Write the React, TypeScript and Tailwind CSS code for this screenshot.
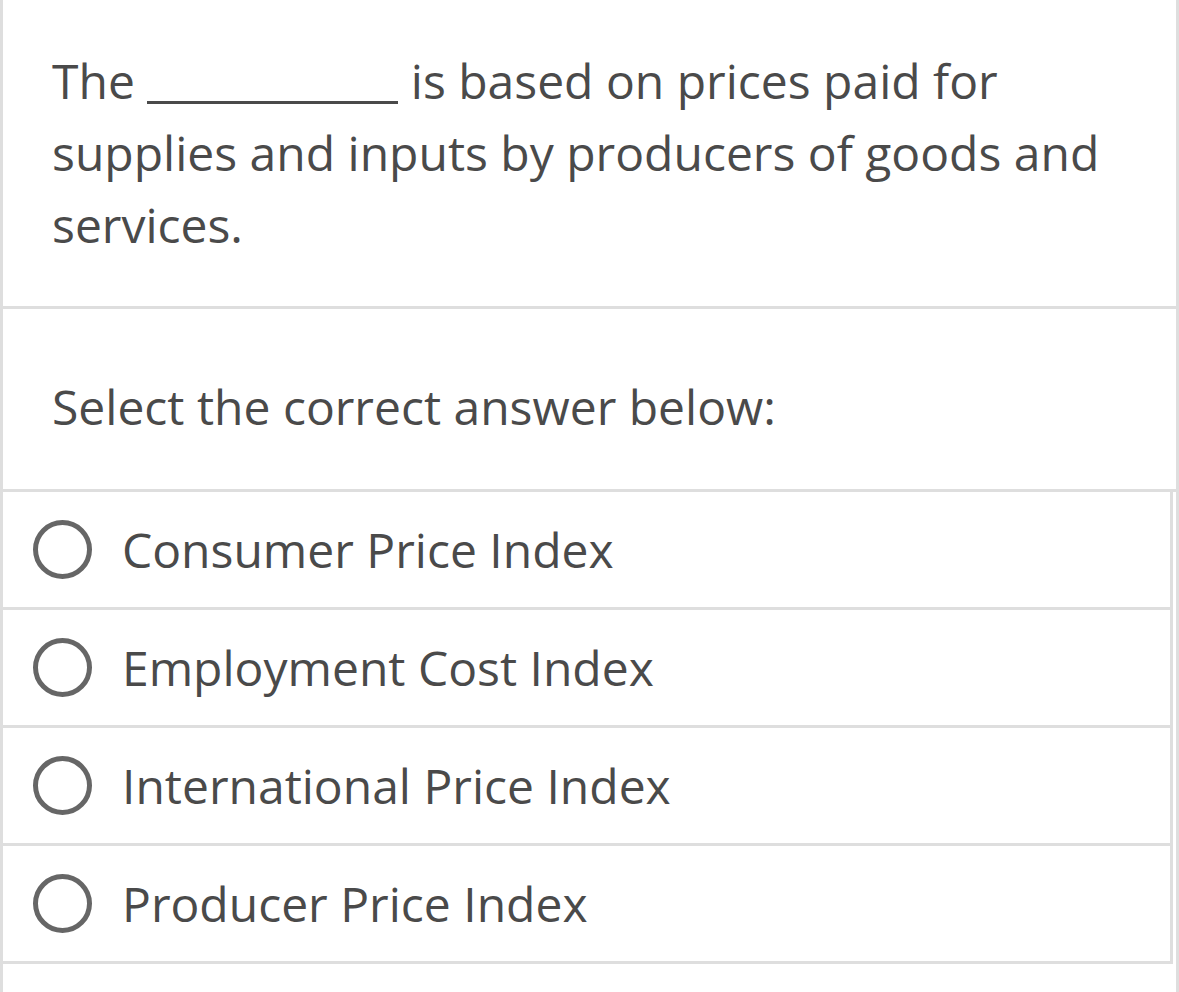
const options = [
  'Consumer Price Index',
  'Employment Cost Index',
  'International Price Index',
  'Producer Price Index',
];

export default function App() {
  return (
    <div
      className="min-h-screen bg-white text-[#4a4a4a]"
      style={{ fontFamily: '"Open Sans", "Noto Sans", sans-serif' }}
    >
      <div className="border-x-[3px] border-[#dedede]">
        <div className="border-b-[3px] border-[#dedede] px-[49px] pt-[45px] pb-[45px] text-[48px] leading-[72px]">
          The{' '}
          <span className="mb-[-5px] inline-block w-[251px] border-b-[3px] border-[#4a4a4a] align-baseline"></span>{' '}
          is based on prices paid for supplies and inputs by producers of goods and services.
        </div>

        <div className="border-b-[3px] border-[#dedede] px-[49px] pt-[62px] pb-[46px] text-[48px] leading-[72px]">
          Select the correct answer below:
        </div>

        <div className="mr-[3px] border-r-[3px] border-b-[3px] border-[#dedede]">
          {options.map((label, i) => (
            <label
              key={label}
              className={`flex h-[115px] cursor-pointer items-center gap-[30px] pl-[30px] ${
                i > 0 ? 'box-content border-t-[3px] border-[#dedede]' : ''
              }`}
            >
              <input type="radio" name="answer" className="peer sr-only" />
              <span className="h-[59px] w-[59px] shrink-0 rounded-full border-[5px] border-[#666666]"></span>
              <span className="text-[48px] leading-[72px]">{label}</span>
            </label>
          ))}
        </div>

        <div className="h-[40px]"></div>
      </div>
    </div>
  );
}
